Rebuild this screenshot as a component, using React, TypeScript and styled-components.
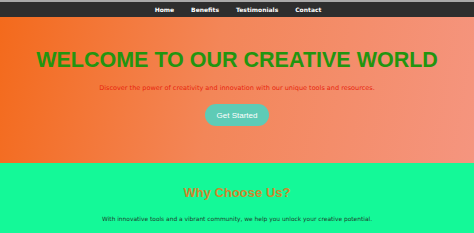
import React from "react";
import styled, { createGlobalStyle } from "styled-components";

const Global = createGlobalStyle`
  html, body { margin: 0; padding: 0; }
  body { font-family: "DejaVu Sans", "Open Sans", sans-serif; background: #14f998; }
  * { box-sizing: border-box; }
`;

const Nav = styled.nav`
  height: 17px;
  background: #2e2e2e;
  border-top: 2px solid #a9a9a9;
  display: flex;
  justify-content: center;
  align-items: center;
  gap: 17px;
  padding-left: 2px;
`;

const NavLink = styled.a`
  color: #fff;
  font-size: 6px;
  font-weight: 700;
  text-decoration: none;
  line-height: 1;
`;

const Hero = styled.section`
  height: 146px;
  background: linear-gradient(100deg, #f36a1c 0%, #f38658 45%, #f5957f 100%);
  display: flex;
  flex-direction: column;
  align-items: center;
  padding-top: 32px;
`;

const Title = styled.h1`
  margin: 0;
  font-family: "Liberation Sans", Arial, sans-serif;
  font-size: 21.5px;
  font-weight: 700;
  color: #22950f;
  line-height: 22px;
  white-space: nowrap;
`;

const Sub = styled.p`
  margin: 13px 0 0;
  font-size: 6.5px;
  color: #e8250f;
  line-height: 8px;
  white-space: nowrap;
`;

const Button = styled.button`
  margin-top: 12px;
  width: 64px;
  height: 22px;
  border: none;
  border-radius: 11px;
  background: #5ecbb6;
  color: #fff;
  font-family: "Liberation Sans", Arial, sans-serif;
  font-size: 8px;
  padding: 0;
`;

const Why = styled.section`
  background: #14f998;
  display: flex;
  flex-direction: column;
  align-items: center;
  padding-top: 21px;
  height: 70px;
`;

const WhyTitle = styled.h2`
  margin: 0;
  font-family: "Liberation Sans", Arial, sans-serif;
  font-size: 13px;
  font-weight: 700;
  color: #d0862c;
  line-height: 17px;
`;

const WhyText = styled.p`
  margin: 14px 0 0;
  font-size: 5.9px;
  color: #1d3d2c;
  line-height: 8px;
  white-space: nowrap;
`;

export default function App() {
  return (
    <>
      <Global />
      <Nav>
        <NavLink>Home</NavLink>
        <NavLink>Benefits</NavLink>
        <NavLink>Testimonials</NavLink>
        <NavLink>Contact</NavLink>
      </Nav>
      <Hero>
        <Title>WELCOME TO OUR CREATIVE WORLD</Title>
        <Sub>Discover the power of creativity and innovation with our unique tools and resources.</Sub>
        <Button>Get Started</Button>
      </Hero>
      <Why>
        <WhyTitle>Why Choose Us?</WhyTitle>
        <WhyText>With innovative tools and a vibrant community, we help you unlock your creative potential.</WhyText>
      </Why>
    </>
  );
}
